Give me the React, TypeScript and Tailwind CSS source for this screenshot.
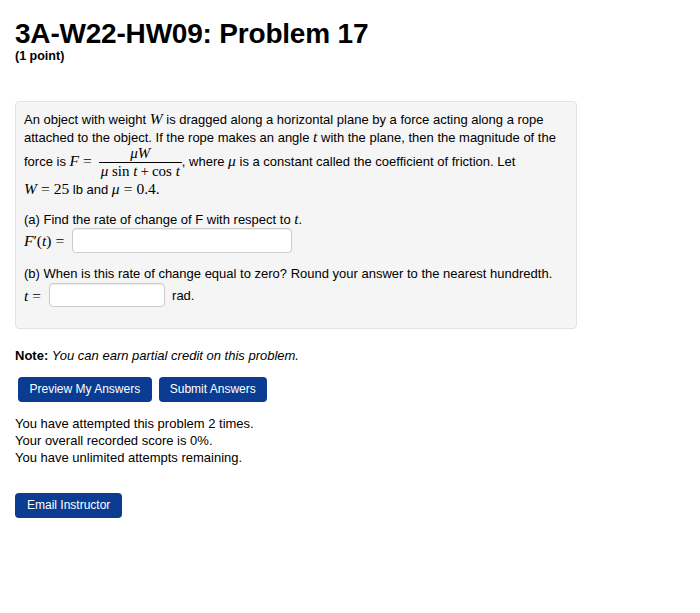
import React from 'react';

function M({ children, className = '' }: { children: React.ReactNode; className?: string }) {
  return <span className={`font-['Liberation_Serif',serif] text-[15.5px] whitespace-nowrap ${className}`}>{children}</span>;
}

function V({ children }: { children: React.ReactNode }) {
  return <i>{children}</i>;
}

// relation sign with thick math spacing
function Eq() {
  return <span className="mx-[4px]">=</span>;
}

export default function App() {
  return (
    <div className="min-h-screen bg-white px-[15px] pt-[19px] font-['Liberation_Sans',Arial,sans-serif] text-[13px] leading-[17px] text-black">
      <h1 className="text-[28px] font-bold leading-[30px] tracking-[-0.2px]">3A-W22-HW09: Problem 17</h1>
      <div className="text-[12.5px] font-bold leading-[14px]">(1 point)</div>

      <div className="mt-[38px] w-[562px] rounded-[4px] border border-[#e3e3e3] bg-[#f5f5f5] px-2 pb-[21px] pt-2">
        <div className="whitespace-nowrap">
          An object with weight <M><V>W</V></M> is dragged along a horizontal plane by a force acting along a rope
        </div>
        <div className="whitespace-nowrap">
          attached to the object. If the rope makes an angle <M><V>t</V></M> with the plane, then the magnitude of the
        </div>
        <div className="whitespace-nowrap">
          force is{' '}
          <M>
            <V>F</V>
            <Eq />
          </M>
          <span className="ml-[3px] inline-flex flex-col items-center align-middle font-['Liberation_Serif',serif] text-[15px] leading-[15px]">
            <span className="pb-[1px]">
              <V>μW</V>
            </span>
            <span className="border-t border-black px-[2px] pb-[1px] pt-[1px]">
              <V>μ</V> sin <V>t</V>
              <span className="mx-[3px]">+</span>cos <V>t</V>
            </span>
          </span>
          , where <M><V>μ</V></M> is a constant called the coefficient of friction. Let
        </div>
        <div className="whitespace-nowrap">
          <M>
            <V>W</V>
            <Eq />
            25
          </M>{' '}
          lb and{' '}
          <M>
            <V>μ</V>
            <Eq />
            0.4.
          </M>
        </div>

        <div className="mt-[12px]">
          (a) Find the rate of change of F with respect to <M><V>t</V></M>.
        </div>
        <div className="flex items-center gap-[4px]">
          <M>
            <V>F</V>′(<V>t</V>)
            <Eq />
          </M>
          <input
            type="text"
            className="h-[25px] w-[220px] rounded-[4px] border border-[#cccccc] bg-white shadow-[inset_0_1px_1px_rgba(0,0,0,0.075)] outline-none"
          />
        </div>

        <div className="mt-[12px]">
          (b) When is this rate of change equal to zero? Round your answer to the nearest hundredth.
        </div>
        <div className="mt-[1px] flex items-center gap-[4px]">
          <M>
            <V>t</V>
            <Eq />
          </M>
          <input
            type="text"
            className="h-[24px] w-[116px] rounded-[4px] border border-[#cccccc] bg-white shadow-[inset_0_1px_1px_rgba(0,0,0,0.075)] outline-none"
          />
          <span className="ml-[3px]">rad.</span>
        </div>
      </div>

      <div className="mt-[18px]">
        <b>Note:</b> <i>You can earn partial credit on this problem.</i>
      </div>

      <div className="ml-[3px] mt-[13px] flex gap-[7px]">
        <button className="h-[25px] rounded-[4px] bg-[#0a3c91] px-[11.5px] text-[12px] text-white">Preview My Answers</button>
        <button className="h-[25px] rounded-[4px] bg-[#0a3c91] px-[11px] text-[12px] text-white">Submit Answers</button>
      </div>

      <div className="mt-[13px]">
        <div>You have attempted this problem 2 times.</div>
        <div>Your overall recorded score is 0%.</div>
        <div>You have unlimited attempts remaining.</div>
      </div>

      <button className="mt-[27px] h-[25px] rounded-[4px] bg-[#0a3c91] px-[12px] text-[12px] text-white">Email Instructor</button>
    </div>
  );
}
